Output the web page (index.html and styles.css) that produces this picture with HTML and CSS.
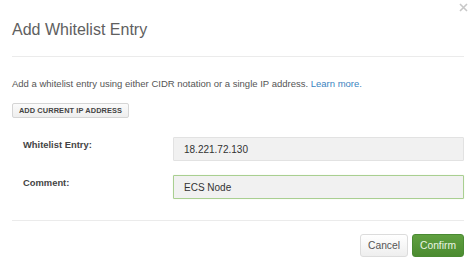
FILE: index.html
```html
<!DOCTYPE html>
<html>
<head>
<meta charset="utf-8">
<link rel="stylesheet" href="styles.css">
</head>
<body>
<div class="modal">
  <button class="close" aria-label="Close">
    <svg width="9" height="9" viewBox="0 0 9 9"><path d="M1 1L8 8M8 1L1 8" stroke="#c8c8c8" stroke-width="1.6" fill="none"/></svg>
  </button>
  <div class="modal-header">
    <h1 class="title">Add Whitelist Entry</h1>
  </div>
  <div class="modal-body">
    <p class="desc">Add a whitelist entry using either CIDR notation or a single IP address. <a class="link" href="#">Learn more.</a></p>
    <button class="btn-small">ADD CURRENT IP ADDRESS</button>
    <div class="form">
      <div class="row">
        <label class="label">Whitelist Entry:</label>
        <div class="input">18.221.72.130</div>
      </div>
      <div class="row">
        <label class="label">Comment:</label>
        <div class="input input-focus">ECS Node</div>
      </div>
    </div>
  </div>
  <div class="modal-footer">
    <button class="btn btn-default">Cancel</button>
    <button class="btn btn-primary">Confirm</button>
  </div>
</div>
</body>
</html>
```
FILE: styles.css
```css
html, body {
  margin: 0;
  padding: 0;
  background: #ffffff;
}
body {
  font-family: "Liberation Sans", Arial, Helvetica, sans-serif;
  color: #555555;
}
.modal {
  position: relative;
  width: 452px;
  margin-left: 12px;
}
.close {
  position: absolute;
  top: 3px;
  right: -4px;
  border: 0;
  background: transparent;
  padding: 0;
  width: 9px;
  height: 9px;
  display: flex;
}
.modal-header {
  padding-top: 18px;
  padding-bottom: 14px;
  border-bottom: 1px solid #ebebeb;
}
.title {
  margin: 0;
  font-size: 16px;
  line-height: 24px;
  font-weight: normal;
  color: #606060;
}
.modal-body {
  padding-top: 20px;
}
.desc {
  margin: 0;
  font-size: 9.5px;
  line-height: 14px;
  color: #555555;
}
.link {
  color: #3b83c0;
  text-decoration: none;
}
.btn-small {
  margin-top: 12px;
  display: block;
  height: 15px;
  width: 117px;
  padding: 0;
  border: 1px solid #d5d5d5;
  border-radius: 2px;
  background: linear-gradient(#fbfbfb, #eeeeee);
  font-family: "Liberation Sans", Arial, sans-serif;
  font-size: 7.4px;
  font-weight: bold;
  color: #444444;
  letter-spacing: 0.1px;
}
.form {
  margin-top: 19px;
  display: flex;
  flex-direction: column;
  gap: 14px;
}
.row {
  display: flex;
  align-items: flex-start;
}
.label {
  width: 150px;
  padding-left: 11px;
  padding-top: 2px;
  font-size: 9.4px;
  line-height: 12px;
  font-weight: bold;
  color: #444444;
}
.input {
  box-sizing: border-box;
  width: 291px;
  height: 24px;
  padding: 0 10px;
  display: flex;
  align-items: center;
  background: #f1f1f1;
  border: 1px solid #e2e2e2;
  border-radius: 1px;
  font-size: 10px;
  color: #333333;
}
.input-focus {
  border-color: #a9cf91;
  box-shadow: 0 0 1px #cfe5bf;
}
.modal-footer {
  margin-top: 21px;
  border-top: 1px solid #ebebeb;
  padding-top: 13px;
  display: flex;
  justify-content: flex-end;
  gap: 4px;
}
.btn {
  box-sizing: border-box;
  height: 23px;
  padding: 0;
  border-radius: 3px;
  font-family: "Liberation Sans", Arial, sans-serif;
  font-size: 10.3px;
}
.btn-default {
  width: 48px;
  border: 1px solid #dcdcdc;
  background: linear-gradient(#ffffff, #eeeeee);
  color: #555555;
}
.btn-primary {
  width: 52px;
  border: 1px solid #4a8a32;
  background: linear-gradient(#60a040, #4b8b30);
  color: #eaf4e3;
}
```
